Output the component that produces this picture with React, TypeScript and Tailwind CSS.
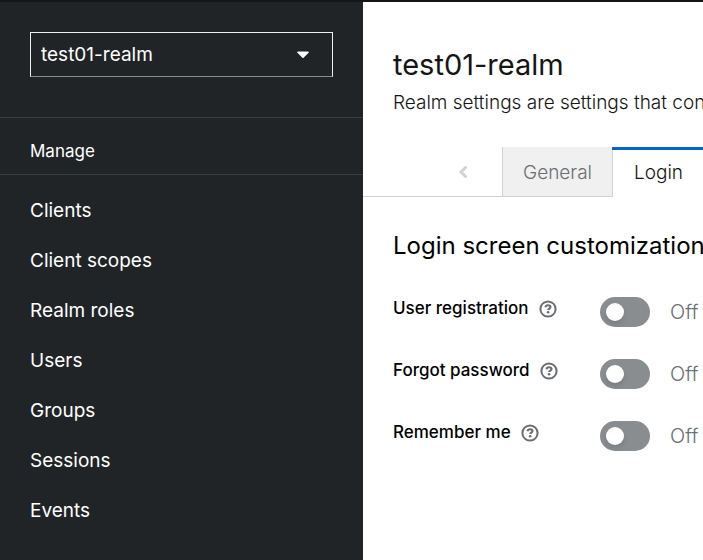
import { useState } from "react";
import { FaCaretDown } from "react-icons/fa";

const navItems = [
  "Clients",
  "Client scopes",
  "Realm roles",
  "Users",
  "Groups",
  "Sessions",
  "Events",
];

const settings = [
  { id: "registration", label: "User registration" },
  { id: "forgot", label: "Forgot password" },
  { id: "remember", label: "Remember me" },
];

function HelpIcon() {
  return (
    <svg width="18" height="18" viewBox="0 0 18 18" fill="none" aria-hidden="true">
      <circle cx="9" cy="9" r="7.6" stroke="currentColor" strokeWidth="2" />
      <path
        d="M6.4 7.2C6.700 5.900 7.700 5.200 9 5.200c1.500 0 2.500.7 2.500 1.900 0 1.500-2.300 1.500-2.300 3"
        stroke="currentColor"
        strokeWidth="2.100"
      />
      <circle cx="9.100" cy="12.300" r="1.300" fill="currentColor" />
    </svg>
  );
}

function ChevronIcon() {
  return (
    <svg width="10" height="14" viewBox="0 0 10 14" fill="none" aria-hidden="true">
      <path
        d="M7.500 2.500 3 7l4.500 4.500"
        stroke="currentColor"
        strokeWidth="3"
        strokeLinecap="round"
      />
    </svg>
  );
}

function Sidebar() {
  return (
    <aside className="w-[363px] shrink-0 bg-[#212427] text-white">
      <div className="relative mx-[30px] mt-[30px] mb-10">
        <select
          aria-label="Realm"
          className="block h-[45px] w-full appearance-none rounded-none border border-[#f0f0f0] border-b-[#8a8d90] bg-transparent px-[10px] pt-[2px] text-[19px] text-white"
        >
          <option>test01-realm</option>
        </select>
        <FaCaretDown className="pointer-events-none absolute top-3 right-5 size-5" />
      </div>
      <nav aria-labelledby="nav-manage">
        <h2
          id="nav-manage"
          className="border-y border-[#3c3f42] px-[30px] pt-[21px] pb-[11px] text-[17px] leading-6"
        >
          Manage
        </h2>
        <ul className="pt-[11px]">
          {navItems.map((item) => (
            <li key={item}>
              <a href="#" className="block px-[30px] py-[10px] text-[19px] leading-[30px]">
                {item}
              </a>
            </li>
          ))}
        </ul>
      </nav>
    </aside>
  );
}

function SettingRow({ id, label }: { id: string; label: string }) {
  const [enabled, setEnabled] = useState(false);

  return (
    <div className="flex h-[30px]">
      <div className="flex w-[207px] shrink-0 items-start gap-[10px]">
        <label htmlFor={id} className="text-[17px] leading-[22px] font-medium text-black">
          {label}
        </label>
        <button
          type="button"
          aria-label={`Help for ${label}`}
          className="flex h-6 items-center text-[#6a6e73]"
        >
          <HelpIcon />
        </button>
      </div>
      <label className="flex items-center gap-5">
        <input
          id={id}
          type="checkbox"
          role="switch"
          checked={enabled}
          onChange={(e) => setEnabled(e.target.checked)}
          className="peer sr-only"
        />
        <span className="flex h-[30px] w-[50px] items-center rounded-full bg-[#8a8d90] px-[6px] peer-checked:justify-end peer-checked:bg-[#0066cc]">
          <span className="size-[18px] rounded-full bg-white shadow-md" />
        </span>
        <span className="text-[20px] leading-[30px] font-light text-[#6a6e73]">
          {enabled ? "On" : "Off"}
        </span>
      </label>
    </div>
  );
}

function App() {
  const [tab, setTab] = useState("login");

  const tabClass = (name: string) =>
    tab === name
      ? "border-t-[3px] border-t-[#0066cc] px-[22px] pb-px text-[#151515]"
      : "border border-t-0 border-[#d2d2d2] bg-[#f0f0f0] px-5 pt-[3px] text-[#6a6e73]";

  return (
    <div className="flex min-h-screen flex-col border-t-2 border-[#151515] bg-white font-['Inter','Liberation_Sans',sans-serif] text-[#151515]">
      <div className="flex grow">
        <Sidebar />
        <main className="min-w-0 grow overflow-hidden whitespace-nowrap">
          <header className="pt-[41px] pl-[30px]">
            <h1 className="text-[29px] leading-[44px]">test01-realm</h1>
            <p className="text-[19px] leading-8 font-light">
              Realm settings are settings that control the options for users
            </p>
          </header>

          <div role="tablist" className="mt-7 flex h-[50px] text-[19px] font-light">
            <button
              type="button"
              aria-label="Scroll left"
              className="flex w-[139px] shrink-0 items-center justify-end border-b border-[#d2d2d2] pr-[34px] text-[#d2d2d2]"
            >
              <ChevronIcon />
            </button>
            <button
              type="button"
              role="tab"
              aria-selected={tab === "general"}
              onClick={() => setTab("general")}
              className={`w-[111px] shrink-0 ${tabClass("general")}`}
            >
              General
            </button>
            <button
              type="button"
              role="tab"
              aria-selected={tab === "login"}
              onClick={() => setTab("login")}
              className={`-ml-px shrink-0 ${tabClass("login")}`}
            >
              Login
            </button>
          </div>

          <section className="pt-[33px] pl-[30px]">
            <h2 className="text-2xl leading-8 text-black">Login screen customization</h2>
            <form className="mt-[35px] flex flex-col gap-8">
              {settings.map((setting) => (
                <SettingRow key={setting.id} {...setting} />
              ))}
            </form>
          </section>
        </main>
      </div>
    </div>
  );
}

export default App;
